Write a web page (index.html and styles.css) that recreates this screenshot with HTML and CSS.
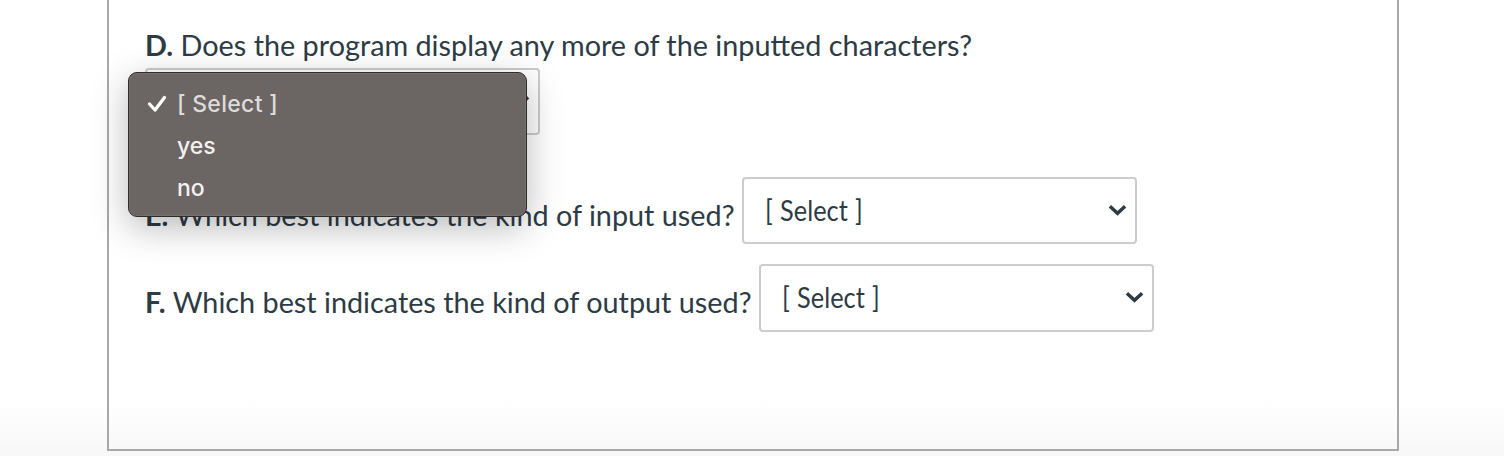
FILE: index.html
```html
<!DOCTYPE html>
<html>
<head>
<meta charset="utf-8">
<link rel="stylesheet" href="styles.css">
</head>
<body>
<div class="page">
  <div class="panel">
    <div class="question q-d">
      <p class="q-text"><b>D.</b> Does the program display any more of the inputted characters?</p>
      <div class="select-wrap">
        <div class="select">
          <span class="select-label">[ Select ]</span>
          <svg class="chev" viewBox="0 0 20 12" width="19" height="12"><path d="M2 2 L10 9.5 L18 2" fill="none" stroke="#2d3b45" stroke-width="3.6"/></svg>
        </div>
        <div class="menu">
          <div class="menu-item selected"><svg class="check" viewBox="0 0 20 18" width="20" height="18"><path d="M2.5 9 L8 15 L17.5 2.5" fill="none" stroke="#ffffff" stroke-width="3.3" stroke-linecap="round" stroke-linejoin="round"/></svg><span class="dim">[ Select ]</span></div>
          <div class="menu-item">yes</div>
          <div class="menu-item">no</div>
        </div>
      </div>
    </div>
    <div class="question row q-e">
      <p class="q-text"><b>E.</b> Which best indicates the kind of input used?</p>
      <div class="select">
        <span class="select-label">[ Select ]</span>
        <svg class="chev" viewBox="0 0 20 12" width="19" height="12"><path d="M2 2 L10 9.5 L18 2" fill="none" stroke="#2d3b45" stroke-width="3.6"/></svg>
      </div>
    </div>
    <div class="question row q-f">
      <p class="q-text"><b>F.</b> Which best indicates the kind of output used?</p>
      <div class="select">
        <span class="select-label">[ Select ]</span>
        <svg class="chev" viewBox="0 0 20 12" width="19" height="12"><path d="M2 2 L10 9.5 L18 2" fill="none" stroke="#2d3b45" stroke-width="3.6"/></svg>
      </div>
    </div>
  </div>
</div>
</body>
</html>
```
FILE: styles.css
```css
html, body {
  margin: 0;
  padding: 0;
}
body {
  width: 1504px;
  height: 456px;
  overflow: hidden;
  background: linear-gradient(to bottom, #ffffff 0px, #ffffff 400px, #f7f7f7 456px);
  font-family: Lato, "Open Sans", sans-serif;
  color: #2d3b45;
}
.page {
  padding-left: 107px;
}
.panel {
  width: 1252px;
  height: 449px;
  border: 2px solid #a8a8a8;
  border-top: none;
  padding-left: 36px;
  box-sizing: content-box;
}
.question {
  font-size: 28.8px;
  line-height: 34px;
}
.q-text {
  margin: 0;
  white-space: nowrap;
}
.q-text b {
  font-weight: 700;
}
.q-d {
  padding-top: 28px;
}
.select-wrap {
  position: relative;
  margin-top: 6px;
  width: 394px;
}
.select {
  width: 395px;
  height: 67px;
  box-sizing: border-box;
  border: 2px solid #cccccc;
  border-radius: 4px;
  background: #fff;
  display: flex;
  align-items: center;
  justify-content: space-between;
  padding: 0 8px 2px 21px;
  flex: none;
}
.select-label {
  font-size: 28.8px;
  display: inline-block;
  transform: scaleX(0.88);
  transform-origin: left center;
  word-spacing: 1px;
}
.chev {
  display: block;
}
.row {
  display: flex;
  align-items: flex-start;
  gap: 7px;
}
.row .q-text {
  padding-top: 21px;
}
.q-e {
  margin-top: 42px;
}
.q-f {
  margin-top: 20px;
}
.q-f .select {
  height: 68px;
}
.menu {
  position: absolute;
  left: -17px;
  top: 4px;
  width: 399px;
  height: 145px;
  box-sizing: border-box;
  background: #6b6564;
  border: 1px solid #2e2b2b;
  border-radius: 9px;
  box-shadow: 0 0 0 1px rgba(255,255,255,0.08) inset, 0 10px 36px rgba(0,0,0,0.28);
  padding-top: 10px;
  font-family: Inter, "Liberation Sans", sans-serif;
  font-size: 23px;
  font-weight: 500;
  color: #f2f0f0;
}
.menu-item {
  height: 42px;
  line-height: 42px;
  padding-left: 48px;
  position: relative;
}
.dim {
  color: #dedbdb;
  letter-spacing: 0.3px;
}
.check {
  position: absolute;
  left: 18px;
  top: 12px;
}
```
